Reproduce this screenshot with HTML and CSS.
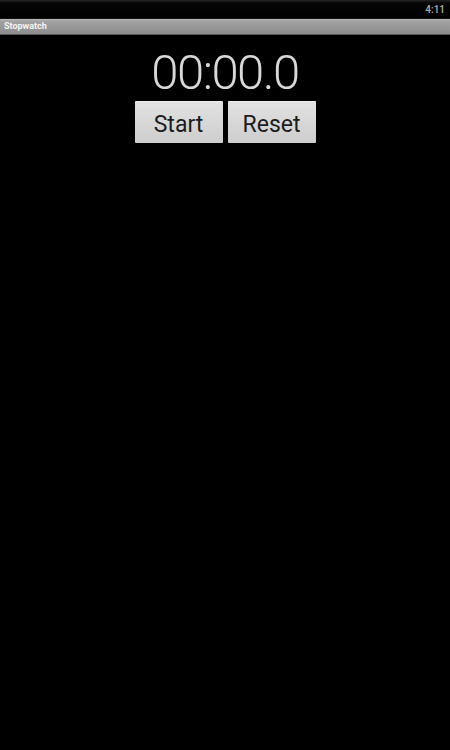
FILE: index.html
```html
<!DOCTYPE html>
<html>
<head>
<meta charset="utf-8">
<link rel="stylesheet" href="styles.css">
</head>
<body>
<div class="status-bar"><span class="clock">4:11</span></div>
<div class="title-bar">Stopwatch</div>
<main class="content">
  <div class="timer">00:00.0</div>
  <div class="buttons">
    <button class="btn">Start</button>
    <button class="btn">Reset</button>
  </div>
</main>
</body>
</html>
```
FILE: styles.css
```css
html, body {
  margin: 0;
  padding: 0;
  background: #000;
  width: 450px;
  height: 750px;
  overflow: hidden;
  font-family: Roboto, "Liberation Sans", sans-serif;
}
.status-bar {
  height: 18px;
  background: linear-gradient(#262626 0, #050505 3px, #000 100%);
  display: flex;
  justify-content: flex-end;
  align-items: center;
  padding-right: 5px;
  border-bottom: 1px solid #111;
}
.clock {
  color: #b0b0b0;
  font-size: 10px;
  font-weight: 500;
}
.title-bar {
  height: 15px;
  background: linear-gradient(#bcbcbc 0, #a2a2a2 2px, #8c8c8c 100%);
  border-bottom: 1px solid #5a5a5a;
  color: #f4f4f4;
  font-size: 9px;
  font-weight: 700;
  line-height: 15px;
  padding-left: 4px;
}
.content {
  display: flex;
  flex-direction: column;
  align-items: center;
  padding-top: 9px;
}
.timer {
  color: #d8d8d8;
  font-size: 49px;
  font-weight: 300;
  line-height: 57px;
  letter-spacing: -1.5px;
}
.buttons {
  display: flex;
  gap: 5px;
}
.btn {
  width: 88px;
  height: 42px;
  border: none;
  border-top: 1px solid #eee;
  background: linear-gradient(#e2e2e2, #cdcdcd);
  color: #1c1c1c;
  font-family: Roboto, "Liberation Sans", sans-serif;
  font-size: 23px;
  padding: 3px 0 0 0;
  border-radius: 1px;
}
```
